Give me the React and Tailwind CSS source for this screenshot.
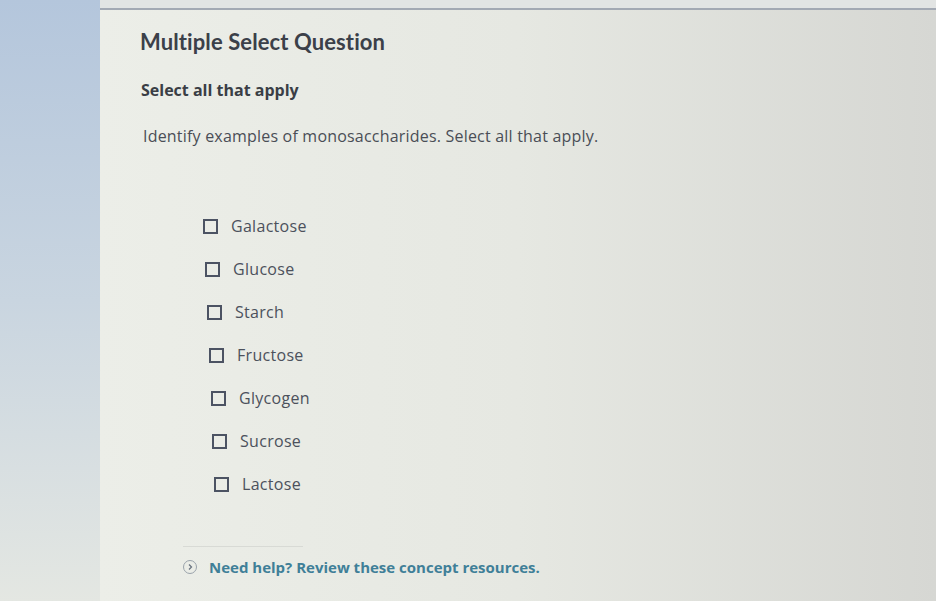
import React from "react";

const options = [
  { label: "Galactose", cls: "ml-[63px]" },
  { label: "Glucose", cls: "ml-[65px]" },
  { label: "Starch", cls: "ml-[67px]" },
  { label: "Fructose", cls: "ml-[69px]" },
  { label: "Glycogen", cls: "ml-[71px]" },
  { label: "Sucrose", cls: "ml-[72px]" },
  { label: "Lactose", cls: "ml-[74px]" },
];

export default function App() {
  return (
    <div
      className="flex w-[936px] h-[601px] overflow-hidden bg-[#e6e8e3]"
      style={{ fontFamily: "'Open Sans', Lato, sans-serif" }}
    >
      <div className="w-[100px] shrink-0 bg-gradient-to-b from-[#b4c6dc] via-[#c9d5e0] via-50% to-[#e4e7e2]" />
      <div className="flex-1 flex flex-col bg-gradient-to-r from-[#eceee8] via-[#e6e8e2] to-[#d6d7d3]">
        <div className="h-[10px] bg-[#e2e4e3] border-b-2 border-[#a3a9b3]" />
        <div className="pl-[40px] flex flex-col">
          <h1 className="mt-[18px] text-[22px] leading-[28px] font-bold text-[#3b4049] tracking-[0.1px] font-['Lato',sans-serif]">
            Multiple Select Question
          </h1>
          <p className="mt-[24px] ml-[1px] text-[16px] leading-[20px] font-bold text-[#3a3e45]">
            Select all that apply
          </p>
          <p className="mt-[26px] ml-[3px] text-[16px] leading-[20px] tracking-[0.2px] text-[#4a4e56]">
            Identify examples of monosaccharides. Select all that apply.
          </p>
          <div className="mt-[71px] flex flex-col gap-[24px]">
            {options.map((o) => (
              <label key={o.label} className={`flex items-center gap-[13px] h-[19px] ${o.cls}`}>
                <span className="w-[15px] h-[15px] border-2 border-[#4c5363] shrink-0" />
                <span className="text-[16px] leading-[19px] tracking-[0.3px] text-[#4c515c]">{o.label}</span>
              </label>
            ))}
          </div>
          <div className="mt-[52px] ml-[43px] w-[120px] h-px bg-[#d8dad5]" />
          <div className="mt-[11px] ml-[43px] flex items-center gap-[12px]">
            <span className="w-[14px] h-[14px] rounded-full border border-[#9aa3ab] flex items-center justify-center">
              <svg width="8" height="8" viewBox="0 0 8 8">
                <path d="M3 1.5 L5.5 4 L3 6.5" fill="none" stroke="#6b7580" strokeWidth="1.3" />
              </svg>
            </span>
            <span className="text-[15px] leading-[18px] font-bold text-[#3f7f98]">
              Need help? Review these concept resources.
            </span>
          </div>
        </div>
      </div>
    </div>
  );
}
